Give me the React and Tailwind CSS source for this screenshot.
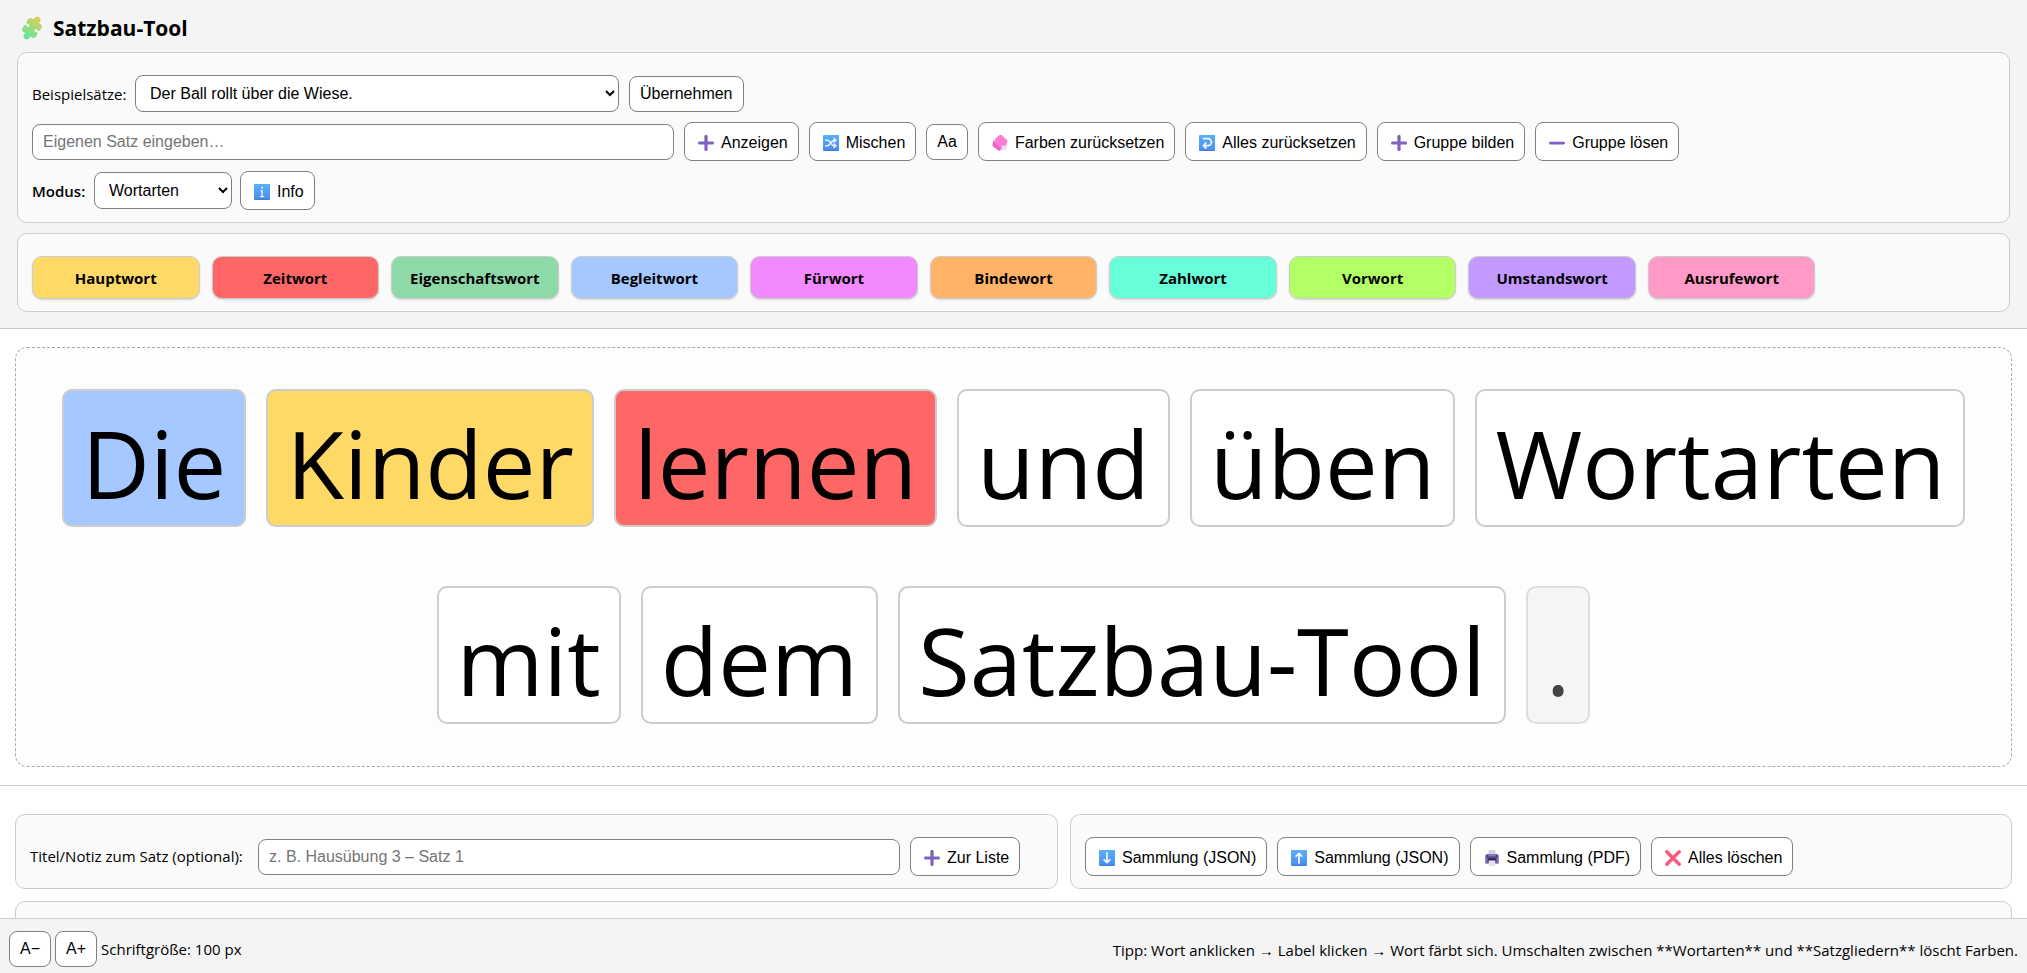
import React, { useState } from 'react';
import { Puzzle } from 'lucide-react';

const FONT = "font-['Open_Sans','Noto_Sans',sans-serif]";
const ARIAL = "font-['Liberation_Sans',Arial,sans-serif]";
const FIELD = `${ARIAL} border border-[#808080] rounded-[8px] bg-white px-[10px] text-[16px] placeholder:text-[#757575]`;

const wordTypes = [
  { name: 'Hauptwort', color: 'bg-[#ffd966]' },
  { name: 'Zeitwort', color: 'bg-[#ff6666]' },
  { name: 'Eigenschaftswort', color: 'bg-[#8fd9a8]' },
  { name: 'Begleitwort', color: 'bg-[#a4c8ff]' },
  { name: 'Fürwort', color: 'bg-[#f28aff]' },
  { name: 'Bindewort', color: 'bg-[#ffb366]' },
  { name: 'Zahlwort', color: 'bg-[#66ffd9]' },
  { name: 'Vorwort', color: 'bg-[#b3ff66]' },
  { name: 'Umstandswort', color: 'bg-[#c199ff]' },
  { name: 'Ausrufewort', color: 'bg-[#ff99c8]' }
];

const startWords = [
  { text: 'Die', type: 'Begleitwort' },
  { text: 'Kinder', type: 'Hauptwort' },
  { text: 'lernen', type: 'Zeitwort' },
  { text: 'und' },
  { text: 'üben' },
  { text: 'Wortarten' },
  { text: 'mit' },
  { text: 'dem' },
  { text: 'Satzbau-Tool' },
  { text: '.', punct: true }
];

// gradients shared by all icons
function Gradients() {
  return (
    <svg className="absolute w-0 h-0" aria-hidden="true">
      <defs>
        <linearGradient id="gBlue" x1="0" y1="0" x2="0" y2="1">
          <stop offset="0" stopColor="#58b0fb" />
          <stop offset="0.85" stopColor="#4c93ee" />
          <stop offset="1" stopColor="#3f7ad8" />
        </linearGradient>
        <linearGradient id="gViolet" gradientUnits="userSpaceOnUse" x1="0" y1="0" x2="0" y2="16">
          <stop offset="0" stopColor="#6b5f9c" />
          <stop offset="0.5" stopColor="#7d63c2" />
          <stop offset="1" stopColor="#8a55dd" />
        </linearGradient>
        <linearGradient id="gPuzzle" gradientUnits="userSpaceOnUse" x1="3" y1="21" x2="21" y2="3">
          <stop offset="0" stopColor="#68e39b" />
          <stop offset="0.5" stopColor="#9fdb7c" />
          <stop offset="1" stopColor="#dccb5e" />
        </linearGradient>
      </defs>
    </svg>
  );
}

function Plus() {
  return (
    <svg viewBox="0 0 16 16" className="w-4 h-4">
      <path d="M6.400 1.200a1.600 1.200 0 0 1 3.200 0V6.400H14.800a1.200 1.600 0 0 1 0 3.200H9.600V14.800a1.600 1.200 0 0 1-3.200 0V9.600H1.200a1.200 1.600 0 0 1 0-3.200H6.400Z" fill="url(#gViolet)" />
    </svg>
  );
}

function Minus() {
  return (
    <svg viewBox="0 0 16 16" className="w-4 h-4">
      <rect x="0" y="6.7" width="16" height="2.7" rx="1.3" fill="#7f5fcb" />
    </svg>
  );
}

function BlueTile({ children }) {
  return (
    <svg viewBox="0 0 16 16" className="w-4 h-4" fill="none" stroke="#f3f3ff" strokeWidth="1.6" strokeLinecap="round" strokeLinejoin="round">
      <rect width="16" height="16" rx="1" fill="url(#gBlue)" stroke="none" />
      {children}
    </svg>
  );
}

const Shuffle = () => (
  <BlueTile>
    <path strokeWidth="1.4" d="M2.8 5.2h1.7c2.6 0 3.6 5.6 6.4 5.6h1.6M2.8 10.8h1.7c2.6 0 3.6-5.6 6.4-5.6h1.6M11 3.4l2 1.8-2 1.8M11 9l2 1.8-2 1.8" />
  </BlueTile>
);

const Undo = () => (
  <BlueTile>
    <path strokeWidth="1.8" d="M4.500 3.600h4.400a3.500 3.500 0 0 1 0 7H4.600M6.800 8.200l-2.400 2.400L6.800 13" />
  </BlueTile>
);

const InfoIcon = () => (
  <BlueTile>
    <circle cx="8" cy="3.7" r="1" fill="#f3f3ff" stroke="none" />
    <path strokeWidth="1.4" d="M6.9 6.6H8v6M6.6 12.6h2.8" />
  </BlueTile>
);

const ArrowDown = () => (
  <BlueTile>
    <path strokeWidth="1.8" d="M8 3v9.4M5.2 9.8 8 12.6l2.8-2.8" />
  </BlueTile>
);

const ArrowUp = () => (
  <BlueTile>
    <path strokeWidth="1.8" d="M8 13V3.6M5.2 6.2 8 3.4l2.8 2.8" />
  </BlueTile>
);

// pink soap with bubbles
const Soap = () => (
  <svg viewBox="0 0 16 16" className="w-4 h-4">
    <path d="M7.2.4a2 2 0 0 1 2.6 0l4.800 4.400a2 2 0 0 1 .2 2.600l-1 4.600-5.400 3.400a2 2 0 0 1-2.400-.2L1.200 11.600a2 2 0 0 1-.6-2.200l.8-4.200Z" fill="#ea63c4" />
    <path d="M7.400.4a2 2 0 0 1 2.400 0l4.800 4.600a1.800 1.800 0 0 1 0 2.800l-4.400 4.200a2 2 0 0 1-2.600 0L2.200 7.600a1.800 1.800 0 0 1 0-2.800Z" fill="#fb7fce" />
    <circle cx="2" cy="4.6" r="1.5" fill="#f6dcf8" />
    <circle cx="12" cy="12.8" r="2.6" fill="#f1d9fb" />
    <circle cx="14.8" cy="10" r="1.2" fill="#f6e6fc" />
    <circle cx="8.6" cy="14.8" r="1" fill="#e9c4f5" />
  </svg>
);

const Printer = () => (
  <svg viewBox="0 0 16 16" className="w-4 h-4">
    <path d="M4.500 0h7v6h-7z" fill="#d3cbe6" />
    <path d="M2.400 4.200h11.200l1 1.400v7.200a.8.8 0 0 1-.8.8H2.200a.8.8 0 0 1-.8-.8V5.600Z" fill="#5f4c94" />
    <path d="M1.400 8h1.800v5.600h-1a.8.8 0 0 1-.8-.8zM12.800 8h1.800v4.800a.8.8 0 0 1-.8.8h-1z" fill="#8577b5" />
    <path d="M4.500 4.200h7v2h-7z" fill="#8a7cb8" />
    <path d="M4.200 8.200h7.600v2.400H4.200z" fill="#33265c" />
    <path d="M4.800 10.400h6.400v5a.6.6 0 0 1-.6.6H5.400a.6.6 0 0 1-.6-.6Z" fill="#e6e0f2" />
    <circle cx="14.300" cy="9.800" r=".7" fill="#f0569a" />
  </svg>
);

const Cross = () => (
  <svg viewBox="0 0 16 16" className="w-4 h-4">
    <path d="M1.800 1.800 14.200 14.200M14.200 1.800 1.800 14.200" stroke="#fb5a7d" strokeWidth="3.400" strokeLinecap="round" />
  </svg>
);

function Button({ icon, children }) {
  return (
    <button className={`${ARIAL} flex items-center gap-[7px] border border-[#808080] rounded-[8px] bg-white pr-[10px] text-[16px] leading-[18px] whitespace-nowrap ${icon ? 'h-[39px] pl-[13px] pt-[2px]' : 'h-9 pl-[10px]'}`}>
      {icon}
      {children}
    </button>
  );
}

function Panel({ className = '', children }) {
  return <section className={`border border-[#ccc] rounded-[10px] bg-[#fafafa] px-[14px] ${className}`}>{children}</section>;
}

function Word({ word }) {
  const type = wordTypes.find(t => t.name === word.type);
  const look = word.punct ? 'bg-[#f5f5f5] border-[#ddd] text-[#444]' : `border-[#ccc] ${type ? type.color : 'bg-white'}`;
  return <span className={`h-[138px] px-[18px] border-2 rounded-[10px] text-[94px] leading-[144px] cursor-pointer ${look}`}>{word.text}</span>;
}

export default function App() {
  const [words] = useState(startWords);
  const [mode, setMode] = useState('Wortarten');

  return (
    <div className={`${FONT} h-screen flex flex-col bg-white text-black text-[15px] leading-[21px]`}>
      <Gradients />
      <header className="bg-[#f4f4f4] border-b border-[#ccc] px-[17px] pt-3 pb-4">
        <h1 className="flex items-center gap-[10px] h-8 mb-2 font-bold text-[21px] pl-1">
          <Puzzle className="w-[22px] h-[22px] -rotate-12" fill="url(#gPuzzle)" stroke="url(#gPuzzle)" strokeWidth={2} />
          Satzbau-Tool
        </h1>
        <Panel className="pt-[22px] pb-3 mb-[10px]">
          <div className="flex items-end gap-[10px] mb-[10px]">
            <label htmlFor="beispiel" className="w-[93px] pb-[7px]">Beispielsätze:</label>
            <select id="beispiel" className={`${FIELD} w-[484px] h-[37px]`}>
              <option>Der Ball rollt über die Wiese.</option>
            </select>
            <Button>Übernehmen</Button>
          </div>
          <div className="flex items-center gap-[10px] mb-[10px]">
            <input aria-label="Eigener Satz" placeholder="Eigenen Satz eingeben…" className={`${FIELD} w-[642px] h-9`} />
            <Button icon={<Plus />}>Anzeigen</Button>
            <Button icon={<Shuffle />}>Mischen</Button>
            <Button>Aa</Button>
            <Button icon={<Soap />}>Farben zurücksetzen</Button>
            <Button icon={<Undo />}>Alles zurücksetzen</Button>
            <Button icon={<Plus />}>Gruppe bilden</Button>
            <Button icon={<Minus />}>Gruppe lösen</Button>
          </div>
          <div className="flex items-center gap-2">
            <label htmlFor="modus" className="w-[54px] pt-[2px] font-semibold">Modus:</label>
            <select id="modus" value={mode} onChange={(e) => setMode(e.target.value)} className={`${FIELD} w-[138px] h-[37px]`}>
              <option>Wortarten</option>
              <option>Satzglieder</option>
            </select>
            <Button icon={<InfoIcon />}>Info</Button>
          </div>
        </Panel>
        <Panel className="pt-[22px] pb-3">
          <div className="grid grid-cols-[repeat(auto-fill,minmax(160px,1fr))] gap-3">
            {wordTypes.map(t => (
              <button key={t.name} className={`${t.color} h-[43px] pt-[2px] border border-[#ccc] rounded-[10px] font-bold text-[15px] shadow-[0_1px_2px_rgba(0,0,0,0.15)]`}>{t.name}</button>
            ))}
          </div>
        </Panel>
      </header>

      <main className="flex-1 min-h-0 overflow-y-auto [scrollbar-width:none]">
        <div className="px-[15px] py-[18px] border-b border-[#ccc]">
          <div className="flex flex-wrap justify-center gap-x-5 gap-y-[59px] border border-dashed border-[#aaa] rounded-[12px] bg-[#fdfdfd] px-8 pt-[41px] pb-[42px]">
            {words.map(w => <Word key={w.text} word={w} />)}
          </div>
        </div>
        <div className="px-[15px] pt-7">
          <div className="grid grid-cols-[1043fr_942fr] gap-3 mb-3">
            <Panel className="pt-[22px] pb-3 flex items-center gap-[10px]">
              <label htmlFor="notiz" className="w-[218px] whitespace-nowrap">Titel/Notiz zum Satz (optional):</label>
              <input id="notiz" placeholder="z. B. Hausübung 3 – Satz 1" className={`${FIELD} w-[642px] h-9`} />
              <Button icon={<Plus />}>Zur Liste</Button>
            </Panel>
            <Panel className="pt-[22px] pb-3 flex items-center gap-[10px]">
              <Button icon={<ArrowDown />}>Sammlung (JSON)</Button>
              <Button icon={<ArrowUp />}>Sammlung (JSON)</Button>
              <Button icon={<Printer />}>Sammlung (PDF)</Button>
              <Button icon={<Cross />}>Alles löschen</Button>
            </Panel>
          </div>
          <Panel className="h-20" />
        </div>
      </main>

      <footer className="flex items-center justify-between bg-[#f4f4f4] border-t border-[#ccc] px-[9px] pt-3 pb-[6px]">
        <div className="flex items-center gap-1">
          <Button>A−</Button>
          <Button>A+</Button>
          <span>Schriftgröße: 100 px</span>
        </div>
        <p className="pt-[2px]">Tipp: Wort anklicken → Label klicken → Wort färbt sich. Umschalten zwischen **Wortarten** und **Satzgliedern** löscht Farben.</p>
      </footer>
    </div>
  );
}
